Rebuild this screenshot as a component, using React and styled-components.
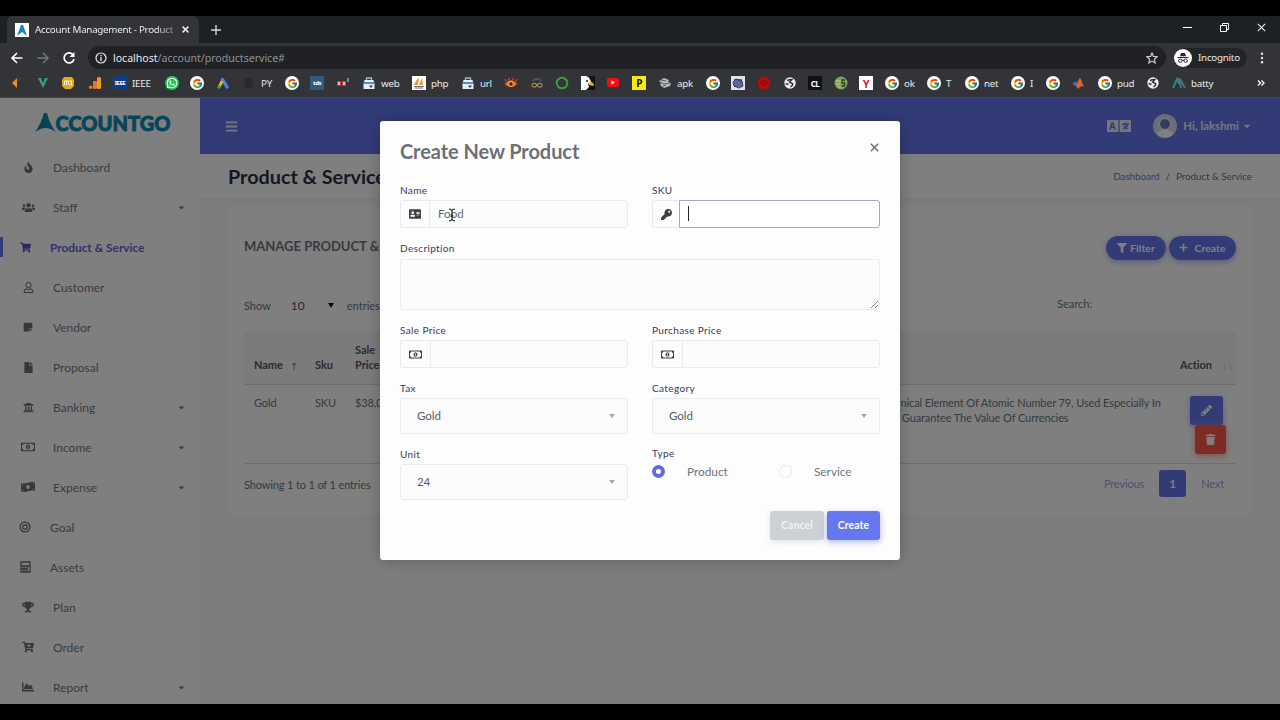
import React from "react";
import styled, { createGlobalStyle, css } from "styled-components";
import {
  FaFire, FaUsers, FaShoppingCart, FaRegUser, FaStickyNote, FaFile, FaUniversity,
  FaRegMoneyBillAlt, FaMoneyBillWave, FaTrophy, FaCartPlus, FaChartArea, FaBars,
  FaLanguage, FaPlus, FaFilter, FaPencilAlt, FaTrash, FaAddressCard, FaKey,
  FaWhatsapp, FaCaretDown,
} from "react-icons/fa";
import { FcGoogle } from "react-icons/fc";

const Global = createGlobalStyle`
  * { box-sizing: border-box; }
  html, body { margin: 0; padding: 0; background: #000; overflow: hidden; }
  body { font-family: Lato, "Open Sans", sans-serif; font-size: 11px; color: #6c757d; }
  svg { display: block; flex: none; }
`;

const Screen = styled.div`
  width: 1280px;
  height: 720px;
  padding: 16px 0;
  display: flex;
  flex-direction: column;
  background: #000;
  overflow: hidden;
`;

/* ---------- browser chrome ---------- */
const Chrome = styled.div`
  font-family: "Noto Sans", "Open Sans", sans-serif;
  color: #e8eaed;
  height: 82px;
  flex: none;
`;
const TabBar = styled.div`
  height: 27px;
  display: flex;
  background: #1e2124;
`;
const Tab = styled.div`
  width: 192px;
  margin-left: 7px;
  padding: 0 9px 0 8px;
  display: flex;
  align-items: center;
  background: #323438;
  border-radius: 6px 6px 0 0;
`;
const TabTitle = styled.div`
  width: 140px;
  margin-left: 6px;
  font-size: 9.8px;
  letter-spacing: -0.28px;
  line-height: 27px;
  white-space: nowrap;
  mask-image: linear-gradient(90deg, #000 86%, rgba(0, 0, 0, 0.35));
`;
const TabClose = styled.span`
  margin-left: 7px;
`;
const NewTab = styled.div`
  padding: 9px 12px;
`;
const WindowButtons = styled.div`
  margin-left: auto;
  padding: 0 14px 4px 0;
  display: flex;
  align-items: center;
  gap: 28px;
`;
const Toolbar = styled.div`
  height: 29px;
  display: flex;
  align-items: center;
  padding: 0 12px 0 10px;
  background: #323438;
`;
const NavIcons = styled.div`
  display: flex;
  gap: 12px;
  width: 78px;
`;
const Address = styled.div`
  width: 1078px;
  height: 23px;
  border-radius: 12px;
  padding: 0 8px 0 7px;
  display: flex;
  align-items: center;
  background: #1f2124;
  font-size: 10.6px;
  color: #8f9297;
  letter-spacing: -0.02px;
`;
const Url = styled.div`
  flex: 1;
  margin-left: 6px;
  b { font-weight: 400; color: #e8eaed; }
`;
const Incognito = styled.div`
  margin-left: 8px;
  width: 73px;
  height: 20px;
  border-radius: 10px;
  background: #222427;
  display: flex;
  align-items: center;
  gap: 6px;
  font-size: 9.8px;
  letter-spacing: -0.25px;
`;
const KebabSlot = styled.div`
  margin-left: 13px;
`;
const Bookmarks = styled.div`
  height: 26px;
  padding: 0 0 3px 8px;
  display: flex;
  align-items: center;
  background: #323438;
  border-bottom: 1px solid #494a4e;
`;
const Bookmark = styled.div`
  width: ${(p) => p.$w}px;
  flex: none;
  display: flex;
  align-items: center;
  gap: 5px;
  font-size: 9.8px;
  letter-spacing: -0.25px;
  white-space: nowrap;
`;
const Favicon = styled.span`
  width: 14px;
  height: 14px;
  flex: none;
  display: flex;
  align-items: center;
  justify-content: center;
  border-radius: ${(p) => p.$r || 0}px;
  background: ${(p) => p.$bg || "transparent"};
  color: ${(p) => p.$c || "#fff"};
  font-size: ${(p) => p.$fs || 8}px;
  font-weight: 700;
  letter-spacing: -0.5px;
`;

/* ---------- page ---------- */
const Page = styled.div`
  position: relative;
  height: 606px;
  display: flex;
  background: #fbfbfc;
  overflow: hidden;
`;
const Sidebar = styled.nav`
  width: 200px;
  flex: none;
  background: #fff;
  box-shadow: 0 3px 6px rgba(0, 0, 0, 0.04);
`;
const Brand = styled.div`
  height: 49px;
  padding: 14px 0 0 35px;
`;
const SideItem = styled.a`
  height: 40px;
  padding-left: ${(p) => (p.$tight ? 15 : 18)}px;
  padding-right: 14px;
  display: flex;
  align-items: center;
  font-size: 12px;
  letter-spacing: 0;
  color: #74797f;
  ${(p) => p.$active && css`
    position: relative;
    color: #6563d8;
    font-weight: 700;
    font-size: 11.8px;
    letter-spacing: 0.02px;
    &::before {
      content: "";
      position: absolute;
      left: 0;
      top: 10px;
      width: 3px;
      height: 20px;
      background: #6777ef;
    }
  `}
`;
const SideIcon = styled.span`
  width: 20px;
  display: flex;
  justify-content: center;
  color: ${(p) => (p.$active ? "#5f50c8" : "#6a6e72")};
`;
const SideLabel = styled.span`
  margin-left: 15px;
  flex: 1;
`;
const Main = styled.main`
  flex: 1;
  min-width: 0;
`;
const Navbar = styled.header`
  height: 56px;
  padding: 0 28px 0 25px;
  display: flex;
  align-items: center;
  background: #6777ef;
  color: #e9ecfa;
`;
const NavRight = styled.div`
  margin-left: auto;
  display: flex;
  align-items: center;
  font-size: 11.3px;
  font-weight: 700;
`;
const UserName = styled.span`
  margin: 0 3px 2px 6px;
  letter-spacing: 0.05px;
`;
const Avatar = styled.span`
  margin-left: 22px;
`;
const Heading = styled.div`
  height: 44px;
  padding: 0 28px;
  display: flex;
  align-items: center;
  justify-content: space-between;
  background: #fff;
  box-shadow: 0 3px 6px rgba(0, 0, 0, 0.03);
`;
const PageTitle = styled.h1`
  margin: 0;
  font-size: 19.8px;
  font-weight: 700;
  color: #2b2f4a;
`;
const Crumbs = styled.div`
  display: flex;
  gap: 6px;
  font-size: 10px;
  letter-spacing: -0.15px;
  padding-bottom: 1px;
  a { color: #6777ef; }
`;
const Card = styled.section`
  margin: 9px 28px 0;
  height: 309px;
  padding: 27px 16px 0;
  background: #fff;
  border-radius: 3px;
  box-shadow: 0 3px 8px rgba(0, 0, 0, 0.03);
`;
const CardHead = styled.div`
  height: 28px;
  display: flex;
  align-items: center;
  justify-content: space-between;
`;
const CardTitle = styled.h2`
  margin: 0 0 5px;
  font-size: 13px;
  font-weight: 700;
  letter-spacing: 0;
  color: #6c757d;
`;
const Buttons = styled.div`
  display: flex;
  gap: 3px;
`;
const Pill = styled.button`
  width: ${(p) => p.$w}px;
  height: 24px;
  padding: 0 0 1px;
  border: 0;
  border-radius: 12px;
  display: flex;
  align-items: center;
  justify-content: center;
  gap: ${(p) => p.$gap}px;
  background: #6777ef;
  color: #fff;
  font: 700 10.3px Lato, sans-serif;
  letter-spacing: 0.1px;
  box-shadow: 0 2px 6px #acb5f6;
`;
const Controls = styled.div`
  height: 70px;
  padding-top: 16px;
  display: flex;
  align-items: center;
`;
const PageSize = styled.div`
  width: 69px;
  margin-left: 7px;
  padding: 0 13px;
  display: flex;
  align-items: center;
  justify-content: space-between;
  font-size: 12px;
  color: #495057;
`;
const Triangle = styled.i`
  border: 3px solid transparent;
  border-top: 5px solid #111;
  border-bottom: 0;
`;
const SearchLabel = styled.span`
  margin-left: auto;
  width: 179px;
  padding-bottom: 3px;
`;
const Row = styled.div`
  display: grid;
  grid-template-columns: 61px 40px 385px minmax(0, 1fr) 56px;
  height: ${(p) => p.$h}px;
  padding-left: 10px;
  border-bottom: 1px solid #d9dde0;
  line-height: 15px;
  ${(p) => p.$head && css`
    background: #f6f6f7;
    font-weight: 700;
    font-size: 11px;
    color: #55595e;
    align-items: end;
    padding-bottom: 12px;
  `}
`;
const Cell = styled.div`
  padding-top: 10px;
  font-size: 11px;
  white-space: pre;
  letter-spacing: -0.1px;
`;
const HeadCell = styled.div`
  display: flex;
  align-items: end;
  white-space: pre;
  letter-spacing: -0.05px;
`;
const Sort = styled.span`
  margin-left: ${(p) => p.$ml}px;
  font: 10px/10px "DejaVu Sans", sans-serif;
  letter-spacing: -2px;
  opacity: ${(p) => p.$o || 0.8};
`;
const Actions = styled.div`
  padding: 11px 0 0 10px;
  display: flex;
  flex-direction: column;
`;
const Action = styled.button`
  width: ${(p) => (p.$red ? 31 : 33)}px;
  height: 29px;
  margin-left: ${(p) => (p.$red ? 5 : 0)}px;
  flex: none;
  padding: 0;
  border: 0;
  border-radius: 3px;
  display: flex;
  align-items: center;
  justify-content: center;
  color: #fff;
  background: ${(p) => (p.$red ? "#fc544b" : "#6777ef")};
  box-shadow: 0 2px 6px ${(p) => (p.$red ? "#fd9b96" : "#acb5f6")};
`;
const TableFoot = styled.div`
  height: 41px;
  display: flex;
  align-items: center;
  justify-content: space-between;
  letter-spacing: -0.14px;
`;
const Pager = styled.div`
  display: flex;
  align-items: center;
  gap: 15px;
  padding: 0 12px 2px 0;
  color: #9a9fe6;
  font-size: 11px;
`;
const PageNumber = styled.b`
  width: 27px;
  height: 27px;
  line-height: 27px;
  text-align: center;
  border-radius: 3px;
  background: #6777ef;
  color: #fff;
`;

/* ---------- modal ---------- */
const Backdrop = styled.div`
  position: absolute;
  inset: 0;
  background: rgba(0, 0, 0, 0.5);
`;
const Modal = styled.form`
  width: 520px;
  height: 439px;
  margin: 23px auto 0 380px;
  padding: 0 20px;
  background: #fdfdfd;
  border-radius: 3px;
  box-shadow: 0 0 15px rgba(0, 0, 0, 0.25);
`;
const ModalHead = styled.div`
  height: 63px;
  padding: 0 1px 4px 0;
  display: flex;
  align-items: center;
  justify-content: space-between;
  color: #6c7075;
`;
const ModalTitle = styled.h3`
  margin: 0;
  font-size: 20px;
  font-weight: 700;
  letter-spacing: -0.08px;
`;
const CloseMark = styled.span`
  padding-bottom: 7px;
`;
const Fields = styled.div`
  display: grid;
  grid-template-columns: 228px 228px;
  column-gap: 24px;
  grid-template-rows: 58px 82px 58px 66px 62px;
`;
const Field = styled.div`
  grid-column: ${(p) => (p.$wide ? "1 / 3" : "auto")};
`;
const FieldLabel = styled.label`
  display: block;
  height: ${(p) => p.$h || 16}px;
  line-height: ${(p) => p.$lh || 13}px;
  font-size: 10px;
  letter-spacing: 0.37px;
  color: #34395e;
`;
const Group = styled.div`
  height: 28px;
  display: flex;
`;
const Addon = styled.div`
  width: ${(p) => p.$w || 30}px;
  border: 1px solid #e8eaf3;
  border-right: 0;
  border-radius: 3px 0 0 3px;
  display: flex;
  align-items: center;
  justify-content: center;
  color: #3c4147;
`;
const Input = styled.div`
  flex: 1;
  padding: 0 8px 1px;
  border: 1px solid ${(p) => (p.$focus ? "#a5a3d0" : "#e9ebf0")};
  border-radius: 0 3px 3px 0;
  background: ${(p) => (p.$focus ? "#fff" : "#fbfcfc")};
  display: flex;
  align-items: center;
  font-size: 11.6px;
  letter-spacing: 0;
  color: #62686e;
`;
const Caret = styled.i`
  width: 1px;
  height: 15px;
  background: #222;
`;
const TextArea = styled.div`
  height: 51px;
  border: 1px solid #e9ebf0;
  border-radius: 3px;
  background: #fcfcfd;
  display: flex;
  align-items: end;
  justify-content: end;
`;
const Select = styled.div`
  height: 36px;
  padding: 0 12px 1px 16px;
  border: 1px solid #e9ebef;
  border-radius: 3px;
  background: #fcfcfc;
  display: flex;
  align-items: center;
  justify-content: space-between;
  font-size: 11.6px;
  letter-spacing: -0.1px;
  color: #555b61;
`;
const SelectArrow = styled.i`
  border: 3.5px solid transparent;
  border-top: 4px solid #a8a8a8;
  border-bottom: 0;
`;
const Radios = styled.div`
  height: 15px;
  display: flex;
  align-items: center;
  font-size: 11.8px;
  letter-spacing: 0;
  color: #6c757d;
`;
const Radio = styled.i`
  width: 13px;
  height: 13px;
  border-radius: 50%;
  border: ${(p) => (p.$on ? "4px solid #626bdc" : "1px solid #e3e5ea")};
  background: #fff;
`;
const RadioText = styled.span`
  width: ${(p) => p.$w}px;
  margin-left: 22px;
`;
const ModalFoot = styled.div`
  display: flex;
  justify-content: end;
  gap: 3px;
  padding-top: 1px;
`;
const ModalButton = styled.button`
  width: ${(p) => p.$w}px;
  height: 29px;
  padding: 0 0 1px;
  border: 0;
  border-radius: 3px;
  font: 700 10.4px Lato, sans-serif;
  letter-spacing: 0.15px;
  color: ${(p) => (p.$primary ? "#fff" : "#f1f3f5")};
  background: ${(p) => (p.$primary ? "#6777ef" : "#cdd0d4")};
  box-shadow: 0 2px 6px ${(p) => (p.$primary ? "#acb5f6" : "#e1e5e8")};
`;
const Pointer = styled.div`
  position: absolute;
  left: 448px;
  top: 110px;
`;

/* ---------- drawings ---------- */
const Cross = ({ s = 8, w = 1.4 }) => (
  <svg width={s} height={s} viewBox="0 0 8 8" fill="none" stroke="currentColor" strokeWidth={w}>
    <path d="M.7.7l6.6 6.6M7.3.7L.7 7.3" />
  </svg>
);
const Pic = ({ children, w = 14, h = 14, ...p }) => (
  <svg width={w} height={h} viewBox={`0 0 ${w} ${h}`} {...p}>{children}</svg>
);
const Bag = () => (
  <Pic>
    <path d="M4.5 4V2h5v2" fill="none" stroke="#9fb4c8" strokeWidth="1.3" />
    <path d="M2.500 4h9l1 4v5h-11V8z" fill="#e8eef3" />
    <path d="M2 6h10l.6 2H1.400z" fill="#4d8fc9" />
    <path d="M7 9.5h4l-2 2.5z" fill="#333" />
  </Pic>
);
const Globe = () => (
  <Pic>
    <circle cx="7" cy="7" r="5.700" fill="#f1f1f1" />
    <path d="M4 4.500c2-1 3-1 5-1L6.500 6l3 1.500c1 1-.5 2-2 3.500M2.500 7.500l3 1" fill="none" stroke="#2f3235" strokeWidth="1.400" />
  </Pic>
);
const Target = () => (
  <Pic w={12} h={12} fill="none" stroke="currentColor" strokeWidth="1.3">
    <circle cx="6" cy="6" r="4.9" /><circle cx="6" cy="6" r="2.2" />
  </Pic>
);
const Calc = () => (
  <Pic w={11} h={12} fill="none" stroke="currentColor" strokeWidth="1.3">
    <path d="M1 1h9v10H1zM1 5h9M4 5v6M7 5v6M1 8h6" />
  </Pic>
);

const bookmarks = [
  [28, "", <Pic><path d="M4 7l5-5v10z" fill="#ef8b2c" /><path d="M9 3l4-1-2 5z" fill="#35433a" /></Pic>],
  [25, "", <Pic><path d="M2 2l5 10 5-10h-3L7 7 5 2z" fill="#33a07a" /></Pic>],
  [27, "", <Pic><path d="M3 1h8l2 3v6l-3 3H4l-3-3V4z" fill="#e9a51c" /><path d="M3.500 9V5h2v4m0-4h2v4m1-4h2v4h-2" fill="none" stroke="#fff4d6" /></Pic>],
  [25, "", <Pic><rect x="9" y="1" width="4" height="12" rx="1.5" fill="#f29b1f" /><rect x="5" y="5" width="4" height="8" rx="1" fill="#e3752a" /><circle cx="2.7" cy="11.2" r="1.8" fill="#e3752a" /></Pic>],
  [52, "IEEE", <Favicon $bg="#0f3f83" $fs={6}>IEEE</Favicon>],
  [25, "", <Favicon $bg="#25c65b" $r={7}><FaWhatsapp size={12} /></Favicon>],
  [26, "", "g"],
  [26, "", <Pic><path d="M6.500 3.500l4.500 7.500" stroke="#4285f4" strokeWidth="3.400" strokeLinecap="round" /><path d="M6.200 5L3.500 10" stroke="#f5b915" strokeWidth="2.800" /><circle cx="3" cy="11" r="1.800" fill="#34a853" /></Pic>],
  [43, "PY", <Pic><rect x="3" y="2" width="8" height="10" rx="2" fill="#27292b" /></Pic>],
  [25, "", "g"],
  [26, "", <Favicon $bg="#2f5a82" $fs={6}>tds</Favicon>],
  [26, "", <Pic><path d="M1 5h4v5H1zM6 5h4v5H6z" fill="#d42b2b" /><path d="M2 6l2 3m0-3L2 9m5-3l2 3m0-3L7 9M12 2v4" stroke="#fff" strokeWidth=".8" /></Pic>],
  [50, "web", <Bag />],
  [49, "php", <Favicon $bg="#fff"><Pic><path d="M2 9C3 6 5 3 7 2L6 9zM7 9l3-7 1 7z" fill="#f09a25" /><path d="M2 10.500h10M3 12h8" stroke="#6c6c8c" /></Pic></Favicon>],
  [43, "url", <Bag />],
  [26, "", <Pic><path d="M1 8c3-5 9-5 12 0-3 4-9 4-12 0z" fill="#e86a28" /><circle cx="7" cy="8" r="2.3" fill="#5a1410" stroke="#f9c12e" /><path d="M2 5L1 3M5 4V2M9 4V2M12 5l1-2" stroke="#d5402c" strokeWidth="1.500" /></Pic>],
  [25, "", <Pic fill="none" stroke="#c9a552"><rect x="2" y="7.500" width="4.500" height="3.500" rx="1.500" /><rect x="7.500" y="7.500" width="4.500" height="3.500" rx="1.500" /><path d="M2.500 5c3-3 6-3 9 0" stroke="#555" strokeWidth="2" /></Pic>],
  [26, "", <Pic><circle cx="7" cy="7" r="5.3" fill="none" stroke="#3f9b43" strokeWidth="2" /></Pic>],
  [25, "", <Favicon $bg="#111"><Pic><path d="M0 0h5q4 1 5 6l-3 2 1 3-3 3H0z" fill="#fff" /><path d="M8 6q4-1 5 4l-5-1z" fill="#f5b51f" /><circle cx="6" cy="5" r="1" fill="#111" /></Pic></Favicon>],
  [26, "", <Pic><rect y="2" x="1" width="12" height="9" rx="2" fill="#f20d12" /><path d="M5.5 4.5v4L9 6.5z" fill="#fff" /></Pic>],
  [26, "", <Favicon $bg="#fbea0c" $c="#111" $fs={10}>P</Favicon>],
  [48, "apk", <Pic><path d="M1 5l5-3 5 2-1 2 3 1-1 3-6 2-4-3 1-2z" fill="#b9bbbd" /><path d="M2 6l4 2 6-1M3 4l5 1M5 10l3-1" stroke="#5c5f62" fill="none" /></Pic>],
  [25, "", "g"],
  [26, "", <Favicon $bg="#dfe1ec"><Pic><path d="M3 3h8v8H3z" fill="#5d6590" /><path d="M2 6l3-3 6 2 1 5-4 2-5-2z" fill="none" stroke="#2d3563" /></Pic></Favicon>],
  [26, "", <Pic><circle cx="7" cy="7" r="6.500" fill="#b30d0d" /><path d="M4 9c-1-4 5-6 6-3s-3 4-4 3 1-3 2-2" fill="none" stroke="#7d0808" /></Pic>],
  [25, "", <Globe />],
  [26, "", <Favicon $bg="#111" $fs={8}>CL</Favicon>],
  [25, "", <Pic><circle cx="7" cy="7" r="6.500" fill="#72a66b" /><path d="M2 5h5M2 8h4M4 11h3" stroke="#e8c84a" /><path d="M11 4H8v3h2.500v3H7.500" fill="none" stroke="#3b3a1c" strokeWidth="1.300" /></Pic>],
  [26, "", <Favicon $bg="#fff" $c="#d81f2a" $fs={11}>Y</Favicon>],
  [42, "ok", "g"], [38, "T", "g"], [46, "net", "g"], [35, "I", "g"], [25, "", "g"],
  [27, "", <Pic><path d="M1 8l4-3 2 3-2 2z" fill="#3a74b5" /><path d="M5 10c2-3 2-7 4-8 2 2 2 6 4 9-3-2-4 0-6 2z" fill="#e3622a" /></Pic>],
  [48, "pud", "g"],
  [26, "", <Globe />],
  [85, "batty", <Pic fill="none" strokeWidth="2"><path d="M1 12l4-9 2 5" stroke="#238c92" /><path d="M7 2l2 10m-1-9l5 9" stroke="#49747c" /></Pic>],
];

const sideItems = [
  ["Dashboard", FaFire, 11], ["Staff", FaUsers, 13, { caret: true }],
  ["Product & Service", FaShoppingCart, 11, { active: true, tight: true }],
  ["Customer", FaRegUser, 11], ["Vendor", FaStickyNote, 10], ["Proposal", FaFile, 11],
  ["Banking", FaUniversity, 11, { caret: true }], ["Income", FaRegMoneyBillAlt, 14, { caret: true }],
  ["Expense", FaMoneyBillWave, 14, { caret: true }], ["Goal", Target, 12, { tight: true }],
  ["Assets", Calc, 12, { tight: true }], ["Plan", FaTrophy, 12], ["Order", FaCartPlus, 12],
  ["Report", FaChartArea, 12, { caret: true }],
];

function BrowserChrome() {
  return (
    <Chrome>
      <TabBar>
        <Tab>
          <Favicon $bg="#fff"><Pic w={12} h={12}><path d="M1 12L5 1h2l4 11-5-4z" fill="#1687b8" /></Pic></Favicon>
          <TabTitle>Account Management - Product</TabTitle>
          <TabClose><Cross s={7} w={1.7} /></TabClose>
        </Tab>
        <NewTab><Pic w={10} h={10} stroke="#d5d7da" strokeWidth="1.4"><path d="M5 0v10M0 5h10" /></Pic></NewTab>
        <WindowButtons>
          <Pic w={9} h={9} stroke="#fff"><path d="M0 4.5h9" /></Pic>
          <Pic w={9} h={9} stroke="#fff" fill="none"><path d="M.5 2.5h6v6h-6zM2.5 2.5v-2h6v6h-2" /></Pic>
          <Cross s={9} w={1} />
        </WindowButtons>
      </TabBar>
      <Toolbar>
        <NavIcons>
          <Pic fill="none" stroke="#fff" strokeWidth="1.6"><path d="M12.5 7H2M7 2L2 7l5 5" /></Pic>
          <Pic fill="none" stroke="#77797d" strokeWidth="1.4"><path d="M1.500 7H12M7 2l5 5-5 5" /></Pic>
          <Pic fill="none" stroke="#fff" strokeWidth="1.7"><path d="M11.500 4.500A5 5 0 1 0 12 8" /><path d="M12.500 1v5h-5z" fill="#fff" stroke="none" /></Pic>
        </NavIcons>
        <Address>
          <Pic w={12} h={12} fill="none" stroke="#e8eaed" strokeWidth="1.200"><circle cx="6" cy="6" r="5" /><path d="M6 5v4M6 3v1.200" strokeWidth="1.3" /></Pic>
          <Url><b>localhost</b>/account/productservice#</Url>
          <Pic w={12} h={12} fill="none" stroke="#d5d7da" strokeWidth="1.1"><path d="M6 1l1.500 3.400 3.700.4-2.800 2.500.8 3.700L6 9.100 2.800 11l.8-3.700L.8 4.800l3.700-.4z" /></Pic>
        </Address>
        <Incognito>
          <Pic w={18} h={18}>
            <circle cx="9" cy="9" r="9" fill="#fff" />
            <path d="M6 7.300L7 4h4l1 3.300zM3.500 8h11v1h-11z" fill="#26282b" />
            <g fill="none" stroke="#26282b"><circle cx="6.300" cy="11.700" r="1.700" /><circle cx="11.700" cy="11.700" r="1.700" /><path d="M8 11.300h2" /></g>
          </Pic>
          Incognito
        </Incognito>
        <KebabSlot>
          <Pic w={4} h={12} fill="#e8eaed"><circle cx="2" cy="1.800" r="1.200" /><circle cx="2" cy="6" r="1.200" /><circle cx="2" cy="10.200" r="1.200" /></Pic>
        </KebabSlot>
      </Toolbar>
      <Bookmarks>
        {bookmarks.map(([w, text, icon], i) => (
          <Bookmark key={i} $w={w}>
            {icon === "g" ? <Favicon $bg="#fff" $r={7}><FcGoogle size={11} /></Favicon> : <Favicon>{icon}</Favicon>}
            {text}
          </Bookmark>
        ))}
        <Pic w={8} h={8} fill="none" stroke="#fff" strokeWidth="1.300"><path d="M1 1.500l2.500 2.500L1 6.500M4.500 1.500L7 4 4.500 6.500" /></Pic>
      </Bookmarks>
    </Chrome>
  );
}

function SideNav() {
  return (
    <Sidebar>
      <Brand>
        <svg width="137" height="22" viewBox="0 0 137 22">
          <defs><linearGradient id="brand" x2="1"><stop stopColor="#2a6a9f" /><stop offset=".6" stopColor="#108bb5" /><stop offset="1" stopColor="#1186b0" /></linearGradient></defs>
          <path d="M0 20Q6 12 9 1h3q3 12 9 19-6-4-10.500-4Q6 16 0 20z" fill="url(#brand)" />
          <text x="20.500" y="18.500" fontFamily="Lato, sans-serif" fontWeight="900" fontSize="20.500" textLength="115" lengthAdjust="spacingAndGlyphs" fill="#108bb5" stroke="#108bb5" strokeWidth=".9">CCOUNTGO</text>
        </svg>
      </Brand>
      {sideItems.map(([name, Icon, size, o = {}]) => (
        <SideItem key={name} $tight={o.tight} $active={o.active}>
          <SideIcon $active={o.active}><Icon size={size} /></SideIcon>
          <SideLabel>{name}</SideLabel>
          {o.caret && <FaCaretDown size={9} />}
        </SideItem>
      ))}
    </Sidebar>
  );
}

function Content() {
  return (
    <Main>
      <Navbar>
        <FaBars size={13} />
        <NavRight>
          <FaLanguage size={24} />
          <Avatar>
            <Pic w={24} h={24}>
              <circle cx="12" cy="12" r="12" fill="#d6dcef" />
              <circle cx="12" cy="10" r="5.500" fill="#6777c9" stroke="#fff" />
              <path d="M4 20c2-6 14-6 16 0-4 5-12 5-16 0z" fill="#fff" />
            </Pic>
          </Avatar>
          <UserName>Hi, lakshmi</UserName>
          <FaCaretDown size={10} />
        </NavRight>
      </Navbar>
      <Heading>
        <PageTitle>Product &amp; Service</PageTitle>
        <Crumbs><a>Dashboard</a><span>/</span><span>Product &amp; Service</span></Crumbs>
      </Heading>
      <Card>
        <CardHead>
          <CardTitle>MANAGE PRODUCT &amp; SERVICE</CardTitle>
          <Buttons>
            <Pill $w={60} $gap={3}><FaFilter size={10} />Filter</Pill>
            <Pill $w={67} $gap={6}><FaPlus size={9} />Create</Pill>
          </Buttons>
        </CardHead>
        <Controls>
          Show<PageSize>10<Triangle /></PageSize>entries
          <SearchLabel>Search:</SearchLabel>
        </Controls>
        <Row $head $h={53}>
          <HeadCell>Name<Sort $ml={7}>↑</Sort></HeadCell>
          <HeadCell>Sku</HeadCell>
          <HeadCell>{"Sale\nPrice"}</HeadCell>
          <HeadCell>Description</HeadCell>
          <HeadCell>Action<Sort $ml={8} $o={0.15}>↑↓</Sort></HeadCell>
        </Row>
        <Row $h={79}>
          <Cell>Gold</Cell>
          <Cell>SKU</Cell>
          <Cell>$38,000.00</Cell>
          <Cell>{"A Yellow Precious Metal, The Chemical Element Of Atomic Number 79, Used Especially In\nJewellery And Decoration, And To Guarantee The Value Of Currencies"}</Cell>
          <Actions>
            <Action><FaPencilAlt size={11} /></Action>
            <Action $red><FaTrash size={11} /></Action>
          </Actions>
        </Row>
        <TableFoot>
          <span>Showing 1 to 1 of 1 entries</span>
          <Pager>Previous<PageNumber>1</PageNumber>Next</Pager>
        </TableFoot>
      </Card>
    </Main>
  );
}

function CreateProduct() {
  return (
    <Backdrop>
      <Modal>
        <ModalHead>
          <ModalTitle>Create New Product</ModalTitle>
          <CloseMark><Cross s={9} w={1.3} /></CloseMark>
        </ModalHead>
        <Fields>
          <Field>
            <FieldLabel>Name</FieldLabel>
            <Group><Addon $w={29}><FaAddressCard size={12} /></Addon><Input>Food</Input></Group>
          </Field>
          <Field>
            <FieldLabel>SKU</FieldLabel>
            <Group><Addon $w={27}><FaKey size={11} /></Addon><Input $focus><Caret /></Input></Group>
          </Field>
          <Field $wide>
            <FieldLabel $h={17}>Description</FieldLabel>
            <TextArea><Pic w={9} h={9} stroke="#777" strokeWidth=".9"><path d="M1 8l7-7M5 8l3-3" /></Pic></TextArea>
          </Field>
          {["Sale Price", "Purchase Price"].map((name) => (
            <Field key={name}>
              <FieldLabel>{name}</FieldLabel>
              <Group><Addon><FaRegMoneyBillAlt size={13} /></Addon><Input /></Group>
            </Field>
          ))}
          {["Tax", "Category"].map((name) => (
            <Field key={name}>
              <FieldLabel>{name}</FieldLabel>
              <Select>Gold<SelectArrow /></Select>
            </Field>
          ))}
          <Field>
            <FieldLabel>Unit</FieldLabel>
            <Select>24<SelectArrow /></Select>
          </Field>
          <Field>
            <FieldLabel $lh={10}>Type</FieldLabel>
            <Radios>
              <Radio $on /><RadioText $w={92}>Product</RadioText>
              <Radio /><RadioText $w={50}>Service</RadioText>
            </Radios>
          </Field>
        </Fields>
        <ModalFoot>
          <ModalButton type="button" $w={54}>Cancel</ModalButton>
          <ModalButton type="button" $primary $w={53}>Create</ModalButton>
        </ModalFoot>
      </Modal>
      <Pointer>
        <Pic w={8} h={14} fill="none" stroke="#111"><path d="M1 1q3 0 3 2 0-2 3-2M4 3v8M1 13q3 0 3-2 0 2 3 2M2.500 8h3" /></Pic>
      </Pointer>
    </Backdrop>
  );
}

export default function App() {
  return (
    <Screen>
      <Global />
      <BrowserChrome />
      <Page>
        <SideNav />
        <Content />
        <CreateProduct />
      </Page>
    </Screen>
  );
}
